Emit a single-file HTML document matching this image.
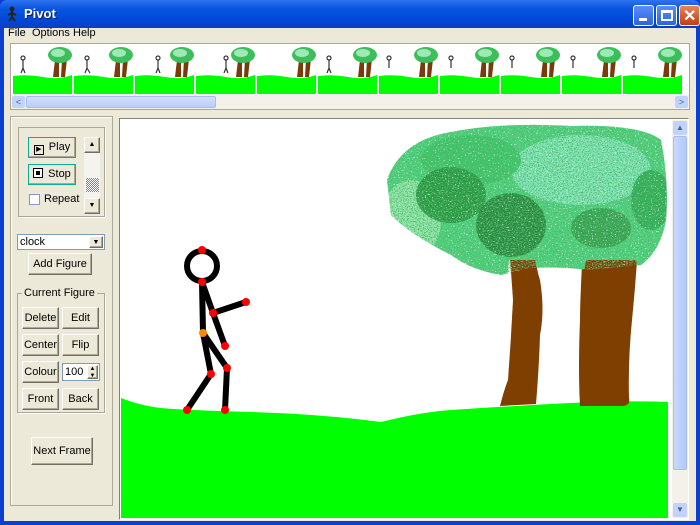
<!DOCTYPE html>
<html><head><style>
*{margin:0;padding:0;box-sizing:border-box}
body{width:700px;height:525px;overflow:hidden;background:#0a3fd0;font-family:"Liberation Sans",sans-serif;font-size:11px;color:#000;position:relative}
.abs{position:absolute}
.title{left:0;top:0;width:700px;height:28px;background:linear-gradient(#2e74f0,#0a56e0 30%,#0048d8 70%,#0a3fc0);border-radius:7px 7px 0 0}
.title span{position:absolute;left:24px;top:6px;color:#fff;font-weight:bold;font-size:13px;font-family:"Liberation Sans",sans-serif;text-shadow:1px 1px #0a246a}
.tb{top:5px;width:21px;height:21px;border:1px solid #fff;border-radius:3px;background:linear-gradient(#5a8ef8,#2a64e0)}
.client{left:4px;top:28px;width:692px;height:493px;background:#ece9d8}
.btn{position:absolute;background:#ece9d8;border:1px solid;border-color:#fff #716f64 #716f64 #fff;box-shadow:inset -1px -1px #aca899;text-align:center;font-size:11px;font-family:"Liberation Sans",sans-serif}
.sb{background:#f3f1ea}
</style></head><body>
<div class="abs title"><span>Pivot</span>
<svg class="abs" style="left:6px;top:6px" width="12" height="16"><circle cx="6" cy="3" r="2.5" fill="#222"/><path d="M6 5V11M6 7L2 9M6 7L10 9M6 11L3 15M6 11L9 15" stroke="#222" stroke-width="2"/></svg>
<div class="abs tb" style="left:633px"><div class="abs" style="left:5px;top:12px;width:8px;height:3px;background:#fff"></div></div>
<div class="abs tb" style="left:656px"><div class="abs" style="left:4px;top:4px;width:12px;height:11px;border:2px solid #fff;border-top-width:3px"></div></div>
<div class="abs tb" style="left:679px;background:linear-gradient(#e8845a,#c43c12)"><div class="abs" style="left:3px;top:0;color:#fff;font-size:16px;font-weight:bold;font-family:'Liberation Sans'">✕</div></div>
</div>
<div class="abs client"></div>
<div class="abs" style="left:8px;top:27px;width:200px;height:13px;font-size:11px;line-height:13px"><span style="position:absolute;left:0;top:0">File</span><span style="position:absolute;left:24px;top:0">Options</span><span style="position:absolute;left:65px;top:0">Help</span></div>
<!-- frame strip -->
<div class="abs" style="left:10px;top:43px;width:680px;height:67px;border:1px solid #aca899;background:#fff"></div>
<svg class="abs" style="left:13px;top:46px" width="674" height="48">
<defs><g id="fr"><rect width="59" height="48" fill="#fff"/><path d="M0 30Q15 28 30 31T59 29V48H0Z" fill="#0f0"/><path d="M40 31 42 14 46 14 46 31ZM48 31 49 13 54 13 52 31Z" fill="#7a3a0a"/><ellipse cx="47" cy="9" rx="12" ry="8" fill="#3cbf5a"/><ellipse cx="45" cy="7" rx="7" ry="4" fill="#9fe8b8"/></g></defs>
<use href="#fr" x="0"/><use href="#fr" x="61"/><use href="#fr" x="122"/><use href="#fr" x="183"/><use href="#fr" x="244"/><use href="#fr" x="305"/><use href="#fr" x="366"/><use href="#fr" x="427"/><use href="#fr" x="488"/><use href="#fr" x="549"/><use href="#fr" x="610"/>
<g stroke="#333" stroke-width="1.2" fill="none"><circle cx="10" cy="12" r="2"/><path d="M10 14V22L8 27M10 22 12 27"/><circle cx="74" cy="12" r="2"/><path d="M74 14V22L72 27M74 22 77 27"/><circle cx="145" cy="12" r="2"/><path d="M145 14V22L143 27M145 22 147 27"/><circle cx="213" cy="12" r="2"/><path d="M213 14V22L211 27M213 22 215 27"/><circle cx="316" cy="12" r="2"/><path d="M316 14V22L314 27M316 22 318 27"/><circle cx="376" cy="12" r="2"/><path d="M376 14V22"/><circle cx="438" cy="12" r="2"/><path d="M438 14V22"/><circle cx="499" cy="12" r="2"/><path d="M499 14V22"/><circle cx="560" cy="12" r="2"/><path d="M560 14V22"/><circle cx="621" cy="12" r="2"/><path d="M621 14V22"/></g>
</svg>
<div class="abs sb" style="left:11px;top:95px;width:678px;height:14px"></div>
<div class="abs" style="left:12px;top:96px;width:13px;height:12px;background:#c1d3fb;border-radius:2px;color:#4d6185;font-size:9px;text-align:center;line-height:12px">&lt;</div>
<div class="abs" style="left:26px;top:96px;width:190px;height:12px;background:linear-gradient(#d3e0fd,#b8cdf8);border:1px solid #a6bff2;border-radius:2px"></div>
<div class="abs" style="left:675px;top:96px;width:13px;height:12px;background:#c1d3fb;border-radius:2px;color:#4d6185;font-size:9px;text-align:center;line-height:12px">&gt;</div>
<!-- left panel -->
<div class="abs" style="left:10px;top:116px;width:103px;height:390px;border:1px solid #aca899;box-shadow:inset 1px 1px #fff"></div>
<div class="abs" style="left:18px;top:127px;width:87px;height:90px;border:1px solid #aca899;box-shadow:1px 1px #fff"></div>
<div class="btn" style="left:28px;top:137px;width:48px;height:21px;line-height:19px;border-color:#1a9; "><span style="display:inline-block;width:10px;height:10px;border:1px solid #000;vertical-align:-1px;margin-right:5px;font-size:7px;line-height:8px">▶</span>Play</div>
<div class="btn" style="left:28px;top:164px;width:48px;height:21px;line-height:19px;border-color:#1a9"><span style="display:inline-block;width:10px;height:10px;border:1px solid #000;vertical-align:-1px;margin-right:5px;background:#fff;box-shadow:inset 0 0 0 2px #fff,inset 0 0 0 5px #000"></span>Stop</div>
<div class="abs" style="left:29px;top:194px;width:11px;height:11px;border:1px solid #7f9db9;background:#fff"></div>
<div class="abs" style="left:44px;top:193px">Repeat</div>
<div class="abs" style="left:84px;top:137px;width:16px;height:77px;background:#f4f3ee"></div>
<div class="btn" style="left:84px;top:137px;width:16px;height:16px;font-size:7px;line-height:14px">▲</div>
<div class="abs" style="left:86px;top:178px;width:13px;height:14px;background:repeating-conic-gradient(#808080 0 25%,#fff 0 50%) 0 0/2px 2px"></div>
<div class="btn" style="left:84px;top:198px;width:16px;height:16px;font-size:7px;line-height:14px">▼</div>
<div class="abs" style="left:17px;top:234px;width:88px;height:16px;border:1px solid #7f9db9;background:#fff;padding-left:2px;line-height:14px">clock</div>
<div class="btn" style="left:89px;top:236px;width:14px;height:12px;font-size:7px;line-height:11px">▼</div>
<div class="btn" style="left:28px;top:253px;width:64px;height:22px;line-height:20px">Add Figure</div>
<div class="abs" style="left:17px;top:293px;width:88px;height:120px;border:1px solid #aca899;box-shadow:1px 1px #fff"></div>
<div class="abs" style="left:22px;top:287px;padding:0 2px;background:#ece9d8">Current Figure</div>
<div class="btn" style="left:22px;top:307px;width:37px;height:22px;line-height:20px">Delete</div>
<div class="btn" style="left:62px;top:307px;width:37px;height:22px;line-height:20px">Edit</div>
<div class="btn" style="left:22px;top:334px;width:37px;height:22px;line-height:20px">Center</div>
<div class="btn" style="left:62px;top:334px;width:37px;height:22px;line-height:20px">Flip</div>
<div class="btn" style="left:22px;top:361px;width:37px;height:22px;line-height:20px">Colour</div>
<div class="abs" style="left:62px;top:363px;width:38px;height:18px;border:1px solid #7f9db9;background:#fff;padding-left:2px;line-height:16px">100</div>
<div class="btn" style="left:87px;top:365px;width:11px;height:14px;font-size:6px;line-height:7px">▲<br>▼</div>
<div class="btn" style="left:22px;top:388px;width:37px;height:22px;line-height:20px">Front</div>
<div class="btn" style="left:62px;top:388px;width:37px;height:22px;line-height:20px">Back</div>
<div class="btn" style="left:31px;top:437px;width:62px;height:28px;line-height:26px">Next Frame</div>
<!-- canvas -->
<div class="abs" style="left:119px;top:118px;width:570px;height:402px;border:1px solid #808080;border-right-color:#fff;border-bottom-color:#fff;background:#fff"></div>
<svg class="abs" style="left:121px;top:120px" width="547" height="398">
<defs><filter id="sp" x="0" y="0" width="1" height="1"><feTurbulence type="fractalNoise" baseFrequency="0.8" numOctaves="1" seed="3"/><feColorMatrix values="0 0 0 0 0.1  0 0 0 0 0.45  0 0 0 0 0.15  0 0 0 -4 2.2"/><feComposite in2="SourceGraphic" operator="in"/></filter>
<filter id="sp2" x="0" y="0" width="1" height="1"><feTurbulence type="fractalNoise" baseFrequency="0.7" numOctaves="1" seed="7"/><feColorMatrix values="0 0 0 0 1  0 0 0 0 1  0 0 0 0 1  0 0 0 -7 2.5"/><feComposite in2="SourceGraphic" operator="in"/></filter>
<clipPath id="fol"><path d="M266 60Q280 20 330 12Q380 2 450 6Q520 4 540 20Q548 60 545 100Q540 130 520 145L470 150Q420 145 400 150L380 155Q350 150 330 135Q290 115 270 95Z"/></clipPath></defs>
<path d="M0 278Q20 286 40 288T130 292T260 302Q300 292 330 290T430 284T547 282V398H0Z" fill="#00ff00"/>
<path d="M386 100L414 100Q412 140 419 160Q424 190 419 215Q418 248 415 284L379 286Q383 270 387 260Q390 220 392 180Q390 150 386 100Z" fill="#7f3f00"/>
<path d="M463 110L518 110Q515 160 511 200Q507 240 508 278Q510 286 500 286L459 286Q457 250 459 200Q459 175 463 110Z" fill="#7f3f00"/>
<g clip-path="url(#fol)">
<path d="M260 0H550V170H520L515 140H465L460 170H420L414 140H388L385 170H260Z" fill="#4cd47e"/>
<ellipse cx="290" cy="100" rx="30" ry="40" fill="#8ee8a8"/>
<ellipse cx="460" cy="50" rx="70" ry="35" fill="#7ee8b8"/>
<ellipse cx="350" cy="40" rx="50" ry="25" fill="#3cc86a"/>
<ellipse cx="330" cy="75" rx="35" ry="28" fill="#249a40"/>
<ellipse cx="390" cy="105" rx="35" ry="32" fill="#1f7f32" opacity="0.85"/>
<ellipse cx="480" cy="108" rx="30" ry="20" fill="#2f9a48" opacity="0.85"/>
<ellipse cx="530" cy="80" rx="20" ry="30" fill="#2fae56"/>
<rect x="260" y="0" width="290" height="170" fill="#000" filter="url(#sp)"/>
<rect x="260" y="0" width="290" height="170" fill="#000" filter="url(#sp2)"/>
</g>
<g stroke="#000" stroke-width="6" stroke-linecap="round" fill="none">
<circle cx="81" cy="146" r="15"/>
<path d="M81 162L82 213M81 162L92 193L125 182M92 193L104 226M82 213L90 254L66 290M82 213L106 248L104 290"/>
</g>
<g fill="#f00"><circle cx="81" cy="130" r="4"/><circle cx="81" cy="162" r="4"/><circle cx="92" cy="193" r="4"/><circle cx="125" cy="182" r="4"/><circle cx="104" cy="226" r="4"/><circle cx="90" cy="254" r="4"/><circle cx="66" cy="290" r="4"/><circle cx="106" cy="248" r="4"/><circle cx="104" cy="290" r="4"/></g>
<circle cx="82" cy="213" r="4" fill="#f80"/>
</svg>
<div class="abs sb" style="left:672px;top:120px;width:16px;height:398px"></div>
<div class="abs" style="left:673px;top:121px;width:14px;height:14px;background:#c1d3fb;border-radius:2px;color:#4d6185;font-size:8px;text-align:center;line-height:14px">▲</div>
<div class="abs" style="left:673px;top:136px;width:14px;height:334px;background:linear-gradient(90deg,#c8d8fc,#b4c9f7);border:1px solid #a6bff2;border-radius:2px"></div>
<div class="abs" style="left:673px;top:503px;width:14px;height:14px;background:#c1d3fb;border-radius:2px;color:#4d6185;font-size:8px;text-align:center;line-height:14px">▼</div>
</body></html>
